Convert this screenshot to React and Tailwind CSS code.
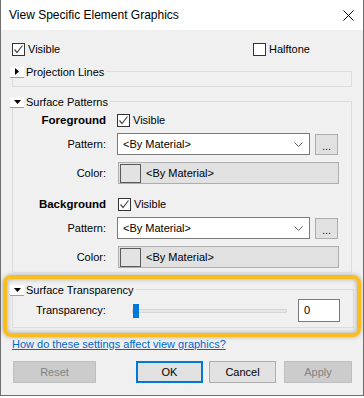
import React from "react";

const font = { fontFamily: '"Liberation Sans", Arial, sans-serif' };

function Check({ checked }) {
    return (
        <span className="w-[13px] h-[13px] border border-[#333333] bg-white flex items-center justify-center shrink-0">
            {checked && (
                <svg width="11" height="11" viewBox="0 0 11 11">
                    <polyline points="1.5,5.5 4,8.5 9.5,1.5" fill="none" stroke="#4a4a4a" strokeWidth="1.2" />
                </svg>
            )}
        </span>
    );
}

function Toggle({ open }) {
    return (
        <span className="w-[14px] h-[11px] bg-white border-b border-[#a0a0a0] flex items-center justify-center shrink-0">
            {open ? (
                <svg width="7" height="4" viewBox="0 0 7 4">
                    <polygon points="0,0 7,0 3.5,4" fill="#000" />
                </svg>
            ) : (
                <svg width="4" height="7" viewBox="0 0 4 7">
                    <polygon points="0,0 4,3.5 0,7" fill="#000" />
                </svg>
            )}
        </span>
    );
}

function Group({ title, open, className, children }) {
    return (
        <div className={"relative border border-[#dcdcdc] " + className}>
            <div className="absolute left-[-3px] top-[-6px] flex items-center bg-[#f0f0f0] pr-[2px]">
                <Toggle open={open} />
                <span className="ml-[2px] text-[11px] leading-[12px] text-black">{title}</span>
            </div>
            {children}
        </div>
    );
}

function Dropdown() {
    return (
        <div className="flex items-center gap-[5px]">
            <div className="w-[194px] h-[22px] bg-white border border-[#7a7a7a] flex items-center justify-between pl-[5px] pr-[6px]">
                <span>&lt;By Material&gt;</span>
                <svg width="9" height="5" viewBox="0 0 9 5">
                    <polyline points="0.5,0.5 4.5,4.5 8.5,0.5" fill="none" stroke="#606060" strokeWidth="1" />
                </svg>
            </div>
            <button className="w-[23px] h-[21px] bg-[#e1e1e1] border border-[#adadad] flex items-end justify-center pb-[4px] leading-[8px] text-[#10104a]">
                ...
            </button>
        </div>
    );
}

function ColorField() {
    return (
        <div className="ml-px w-[221px] h-[22px] bg-[#e1e1e1] border border-[#adadad] flex items-center pl-px gap-[5px]">
            <span className="w-[21px] h-[19px] border border-[#5a5a5a] bg-[#e3e3e3]" />
            <span>&lt;By Material&gt;</span>
        </div>
    );
}

function Field({ label, bold, children, className = "" }) {
    return (
        <>
            <span className={"text-right " + (bold ? "font-bold text-[11.5px] " : "") + className}>{label}</span>
            <div className={className}>{children}</div>
        </>
    );
}

export default function App() {
    return (
        <div style={font} className="w-[364px] h-[396px] bg-[#f0f0f0] border-x border-b border-[#6f6f6f] flex flex-col text-[11px] text-black">
            {/* Title bar */}
            <div className="h-[30px] bg-white flex items-center justify-between pl-[8px] pr-[9px] shrink-0">
                <span className="text-[12px]">View Specific Element Graphics</span>
                <svg width="11" height="11" viewBox="0 0 11 11">
                    <path d="M0.5 0.5 L10.5 10.5 M10.5 0.5 L0.5 10.5" stroke="#000" strokeWidth="1" />
                </svg>
            </div>

            <div className="px-[11px] flex flex-col">
                {/* Visible / Halftone */}
                <div className="mt-[13px] h-[13px] flex items-center">
                    <label className="w-[241px] flex items-center gap-[3px]">
                        <Check checked />
                        <span>Visible</span>
                    </label>
                    <label className="flex items-center gap-[3px]">
                        <Check />
                        <span>Halftone</span>
                    </label>
                </div>

                <Group title="Projection Lines" className="mt-[15px] h-[16px]" />

                <Group title="Surface Patterns" open className="mt-[14px] h-[172px]">
                    <div className="grid grid-cols-[93px_221px] gap-x-[11px] items-center pt-[12px] leading-[13px]">
                        <Field label="Foreground" bold>
                            <label className="flex items-center gap-[3px] h-[13px]">
                                <Check checked />
                                <span>Visible</span>
                            </label>
                        </Field>
                        <Field label="Pattern:" className="mt-[6px]">
                            <Dropdown />
                        </Field>
                        <Field label="Color:" className="mt-[7px]">
                            <ColorField />
                        </Field>
                        <Field label="Background" bold className="mt-[14px]">
                            <label className="ml-px flex items-center gap-[3px] h-[13px]">
                                <Check checked />
                                <span>Visible</span>
                            </label>
                        </Field>
                        <Field label="Pattern:" className="mt-[6px]">
                            <Dropdown />
                        </Field>
                        <Field label="Color:" className="mt-[7px]">
                            <ColorField />
                        </Field>
                    </div>
                </Group>

                {/* Highlighted Surface Transparency */}
                <div className="-mx-[9px] mt-[2px] h-[62px] rounded-[8px] border-[4px] border-[#f9bd1f] shadow-[0_0_4px_rgba(0,0,0,0.3),inset_0_0_5px_rgba(0,0,0,0.3)] pt-[10px] pl-[5px] pr-[3px]">
                    <Group title="Surface Transparency" open className="h-[39px]">
                        <div className="flex items-center pt-[9px] pl-[23px]">
                            <span className="w-[96px]">Transparency:</span>
                            <div className="relative w-[155px] h-[4px] bg-[#e7e7e7] border border-[#d6d6d6]">
                                <span className="absolute left-0 top-[-6px] w-[6px] h-[14px] bg-[#0078d7]" />
                            </div>
                            <div className="ml-[11px] w-[42px] h-[23px] bg-white border border-[#7a7a7a] flex items-center pl-[5px]">
                                0
                            </div>
                        </div>
                    </Group>
                </div>

                <a className="mt-0 h-[14px] leading-[14px] text-[#0066cc] underline">
                    How do these settings affect view graphics?
                </a>

                <div className="mt-[10px] flex items-center">
                    <button className="ml-px w-[83px] h-[22px] bg-[#cccccc] border border-[#bfbfbf] text-[#838383]">Reset</button>
                    <button className="ml-[40px] w-[67px] h-[22px] bg-[#e1e1e1] border-2 border-[#0078d7]">OK</button>
                    <button className="ml-[6px] w-[67px] h-[22px] bg-[#e1e1e1] border border-[#adadad]">Cancel</button>
                    <button className="ml-[8px] w-[68px] h-[22px] bg-[#cccccc] border border-[#bfbfbf] text-[#838383]">Apply</button>
                </div>
            </div>
        </div>
    );
}
